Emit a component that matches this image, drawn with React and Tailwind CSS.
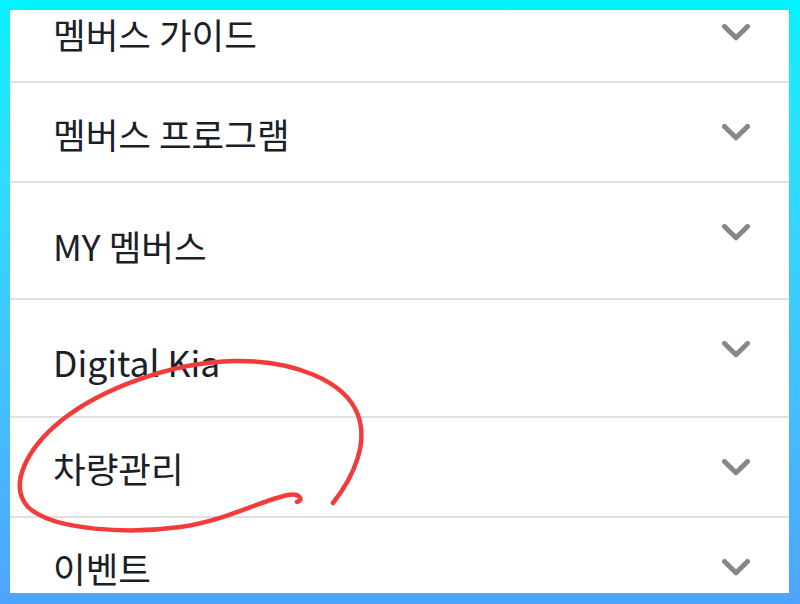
import React from "react";

const rows = [
  { label: "멤버스 가이드", h: "h-[73px]", pt: "pt-[4px]", cpt: "pt-[14px]" },
  { label: "멤버스 프로그램", h: "h-[100px]", pt: "pt-[31px]", cpt: "pt-[41px]" },
  { label: "MY 멤버스", h: "h-[117px]", pt: "pt-[43px]", cpt: "pt-[41px]" },
  { label: "Digital Kia", h: "h-[118px]", pt: "pt-[42px]", cpt: "pt-[41px]" },
  { label: "차량관리", h: "h-[100px]", pt: "pt-[30px]", cpt: "pt-[41px]" },
  { label: "이벤트", h: "h-[100px]", pt: "pt-[30px]", cpt: "pt-[41px]" },
];

function Chevron() {
  return (
    <svg width="28" height="17" viewBox="0 0 28 17" className="block">
      <path
        d="M2.5 2.5 L14 13.8 L25.5 2.5"
        fill="none"
        stroke="#878787"
        strokeWidth="5"
        strokeLinecap="round"
        strokeLinejoin="round"
      />
    </svg>
  );
}

export default function App() {
  return (
    <div className="w-[800px] h-[604px] bg-gradient-to-b from-[#00f2ff] to-[#4ea4ff] pt-[10px] pl-[10px] pr-[11px] pb-[11px]">
      <div className="relative w-full h-full bg-white overflow-hidden">
        <div className="flex flex-col">
          {rows.map((r, i) => (
            <div
              key={i}
              className={`${r.h} shrink-0 flex justify-between items-start border-b-2 border-[#e0e0e0] pl-[43px] pr-[39px]`}
            >
              <div
                className={`${r.pt} text-[35.5px] leading-[40px] text-[#1b2027] whitespace-nowrap`}
                style={{ fontFamily: '"Noto Sans CJK KR", "Noto Sans", sans-serif' }}
              >
                {r.label}
              </div>
              <div className={r.cpt}>
                <Chevron />
              </div>
            </div>
          ))}
        </div>
        <svg
          className="absolute left-0 top-0 pointer-events-none"
          width="779"
          height="583"
          viewBox="10 10 779 583"
        >
          <path
            d="M333 503 C355 475 368 442 358 415 C345 380 292 360 235 361 C170 362 100 390 62 420 C27 448 8 485 28 507 C53 531 130 534 180 527 C225 521 262 500 288 495 C300 493 304 500 297 502"
            fill="none"
            stroke="#f23b3b"
            strokeWidth="4.5"
            strokeLinecap="round"
            strokeLinejoin="round"
          />
        </svg>
      </div>
    </div>
  );
}
